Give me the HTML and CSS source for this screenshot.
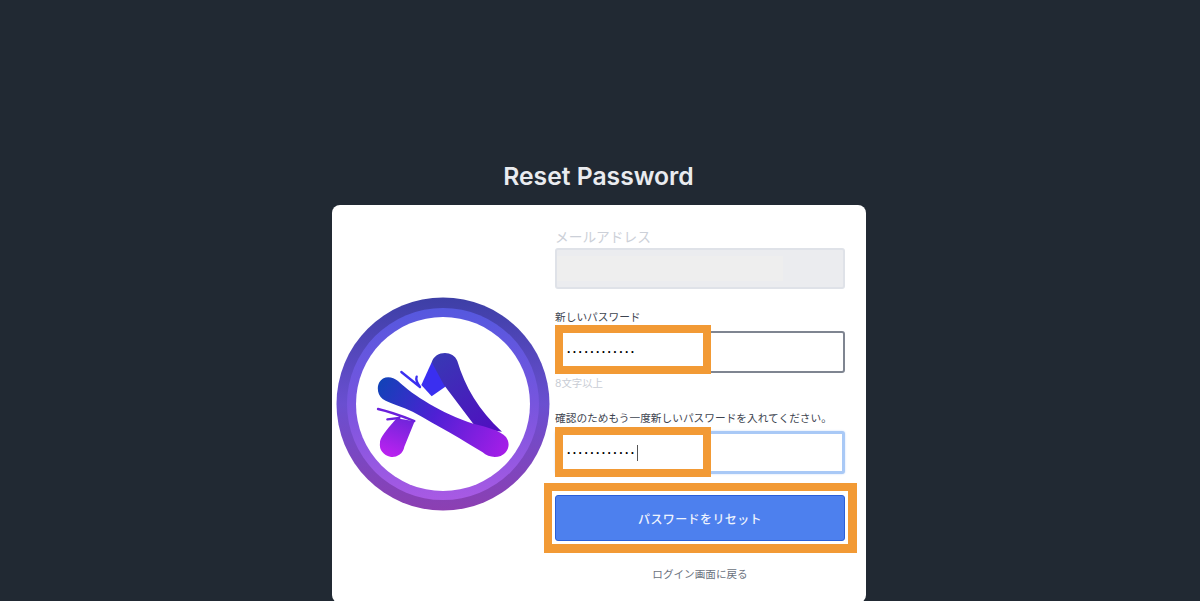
FILE: index.html
```html
<!DOCTYPE html>
<html>
<head>
    <title>Reset Password</title>
    <meta charset="utf-8">
    <link rel="stylesheet" href="styles.css">
</head>
<body>
    <h1 class="title">Reset Password</h1>

    <div class="card">
        <div class="logo">
            <svg width="214" height="214" viewBox="0 0 214 214">
                <defs>
                    <linearGradient id="ringOuter" x1="0" y1="0" x2="0" y2="1">
                        <stop offset="0" stop-color="#3d3fa6"/>
                        <stop offset="0.5" stop-color="#6a4fd0"/>
                        <stop offset="1" stop-color="#8c3fb2"/>
                    </linearGradient>
                    <linearGradient id="ringInner" x1="0" y1="0" x2="0" y2="1">
                        <stop offset="0" stop-color="#5558df"/>
                        <stop offset="0.5" stop-color="#7755de"/>
                        <stop offset="1" stop-color="#a85ae4"/>
                    </linearGradient>
                    <linearGradient id="longStroke" gradientUnits="userSpaceOnUse" x1="30" y1="110" x2="410" y2="320">
                        <stop offset="0" stop-color="#1242b8"/>
                        <stop offset="0.45" stop-color="#4f20d4"/>
                        <stop offset="1" stop-color="#a61ee8"/>
                    </linearGradient>
                    <linearGradient id="rightLeg" gradientUnits="userSpaceOnUse" x1="200" y1="30" x2="370" y2="250">
                        <stop offset="0" stop-color="#3838b4"/>
                        <stop offset="1" stop-color="#4f10c0"/>
                    </linearGradient>
                    <linearGradient id="drop" gradientUnits="userSpaceOnUse" x1="100" y1="225" x2="60" y2="335">
                        <stop offset="0" stop-color="#7424dc"/>
                        <stop offset="1" stop-color="#bc22f0"/>
                    </linearGradient>
                </defs>
                <circle cx="107" cy="107" r="106.5" fill="url(#ringOuter)"/>
                <circle cx="107" cy="107" r="96" fill="url(#ringInner)"/>
                <circle cx="107" cy="107" r="87" fill="#fff"/>
                <g transform="translate(34 48) scale(0.3333)">
                    <path fill="#3a2ff0" d="M185,52 L154,120 L185,154 L226,125 L240,90 Z"/>
                    <path fill="url(#rightLeg)" d="M185,52 C195,16 250,14 262,48 C285,125 325,195 396,260 L320,250 L222,120 Z"/>
                    <path fill="url(#longStroke)" d="M28,112 C38,92 66,92 84,108 C130,152 215,205 310,236 C350,246 392,256 408,276 C424,298 414,324 392,333 C375,339 352,336 338,322 C285,288 200,240 128,200 C98,186 60,176 38,162 C22,150 20,126 28,112 Z"/>
                    <path fill="none" stroke="#3a2ff0" stroke-width="7" stroke-linecap="round" d="M94,81 L150,126 M140,95 C136,105 142,115 150,126"/>
                    <path fill="url(#drop)" d="M80,220 L134,229 L103,305 A36,36 0 0 1 30,293 C31,280 40,265 80,220 Z"/>
                    <path fill="none" stroke="#6a20dc" stroke-width="7" stroke-linecap="round" d="M24,192 C60,200 100,215 133,228 M52,223 L88,219"/>
                </g>
            </svg>
        </div>

        <form class="form">
            <div class="field field-email">
                <label class="label label-disabled">メールアドレス</label>
                <div class="input input-disabled"><div class="redacted"></div></div>
            </div>

            <div class="field field-new">
                <label class="label">新しいパスワード</label>
                <div class="input input-filled">
                    <span class="dots">············</span>
                    <div class="mark mark-input"></div>
                </div>
                <div class="hint">8文字以上</div>
            </div>

            <div class="field field-confirm">
                <label class="label">確認のためもう一度新しいパスワードを入れてください。</label>
                <div class="input input-focus">
                    <span class="dots">············</span><span class="caret"></span>
                    <div class="mark mark-input"></div>
                </div>
            </div>

            <div class="submit-wrap">
                <button class="submit" type="button">パスワードをリセット</button>
                <div class="mark mark-button"></div>
            </div>

            <a class="back" href="#">ログイン画面に戻る</a>
        </form>
    </div>
</body>
</html>
```

FILE: styles.css
```css
html, body {
    height: 601px;
    overflow: hidden;
}

body {
    margin: 0;
    background-color: #212933;
    font-family: Inter, "Noto Sans CJK JP", sans-serif;
    display: flex;
    flex-direction: column;
    align-items: center;
}

.title {
    margin: 160px 3px 12px 0;
    font-size: 24.7px;
    line-height: 33px;
    font-weight: 600;
    color: #e9ebef;
}

.card {
    flex: none;
    box-sizing: border-box;
    width: 534px;
    height: 398px;
    margin-right: 2px;
    padding: 0 21px 0 4px;
    background-color: white;
    border-radius: 8px;
    display: flex;
    align-items: center;
}

.logo {
    width: 219px;
    flex: none;
    height: 214px;
}

.form {
    width: 290px;
    height: 100%;
    box-sizing: border-box;
    padding-top: 22px;
}

.field {
    position: relative;
}

.label {
    display: block;
    font-size: 10.7px;
    line-height: 16px;
    color: #3d4450;
}

.label-disabled {
    font-size: 13.7px;
    line-height: 20px;
    color: #ccd0d8;
}

.input {
    position: relative;
    box-sizing: border-box;
    height: 42px;
    padding-left: 10px;
    border: 2px solid #7f8591;
    border-radius: 3px;
    background-color: white;
    display: flex;
    align-items: center;
}

.input-disabled {
    height: 41px;
    margin-top: 1px;
    padding-left: 0;
    background-color: #ebecef;
    border: 2px solid #dfe2e8;
}

.redacted {
    width: 226px;
    height: 25px;
    background-color: #eeeeee;
}

.input-focus {
    height: 43px;
    padding-left: 9px;
    border: 3px solid #a9c9f6;
    box-shadow: 0 0 2px #c4d9f8;
}

.dots {
    color: black;
    font-family: "Liberation Sans", sans-serif;
    font-weight: bold;
    font-size: 12px;
    letter-spacing: 1.8px;
    position: relative;
    z-index: 1;
}

.caret {
    width: 1px;
    height: 16px;
    background-color: #555;
    position: relative;
    z-index: 1;
}

.hint {
    margin-top: 4px;
    font-size: 10.4px;
    line-height: 13px;
    color: #c9cdd5;
}

.field-new {
    margin-top: 21px;
}

.field-new .input {
    margin-top: 5px;
}

.field-confirm {
    margin-top: 21px;
}

.field-confirm .input {
    margin-top: 4px;
}

/* orange boxes that were drawn on top of the screenshot */
.mark {
    position: absolute;
    box-sizing: border-box;
    border: 8px solid #f29a35;
}

.mark-input {
    left: -2px;
    top: -8px;
    width: 156px;
    height: 49px;
}

.input-focus .mark-input {
    left: -3px;
    top: -7px;
    height: 50px;
}

.submit-wrap {
    position: relative;
    margin-top: 21px;
}

.submit {
    display: block;
    box-sizing: border-box;
    width: 100%;
    height: 46px;
    border: 1px solid #2a5fd8;
    border-radius: 3px;
    background-color: #4d80ee;
    color: #eef3fd;
    font-family: inherit;
    font-size: 12px;
    font-weight: 500;
    letter-spacing: 0.4px;
}

.mark-button {
    left: -11px;
    top: -12px;
    width: 313px;
    height: 70px;
    border-width: 8px 9px 9px 8px;
}

.back {
    display: block;
    margin-top: 26px;
    text-align: center;
    font-size: 10.6px;
    line-height: 16px;
    color: #6b7280;
    text-decoration: none;
}
```
